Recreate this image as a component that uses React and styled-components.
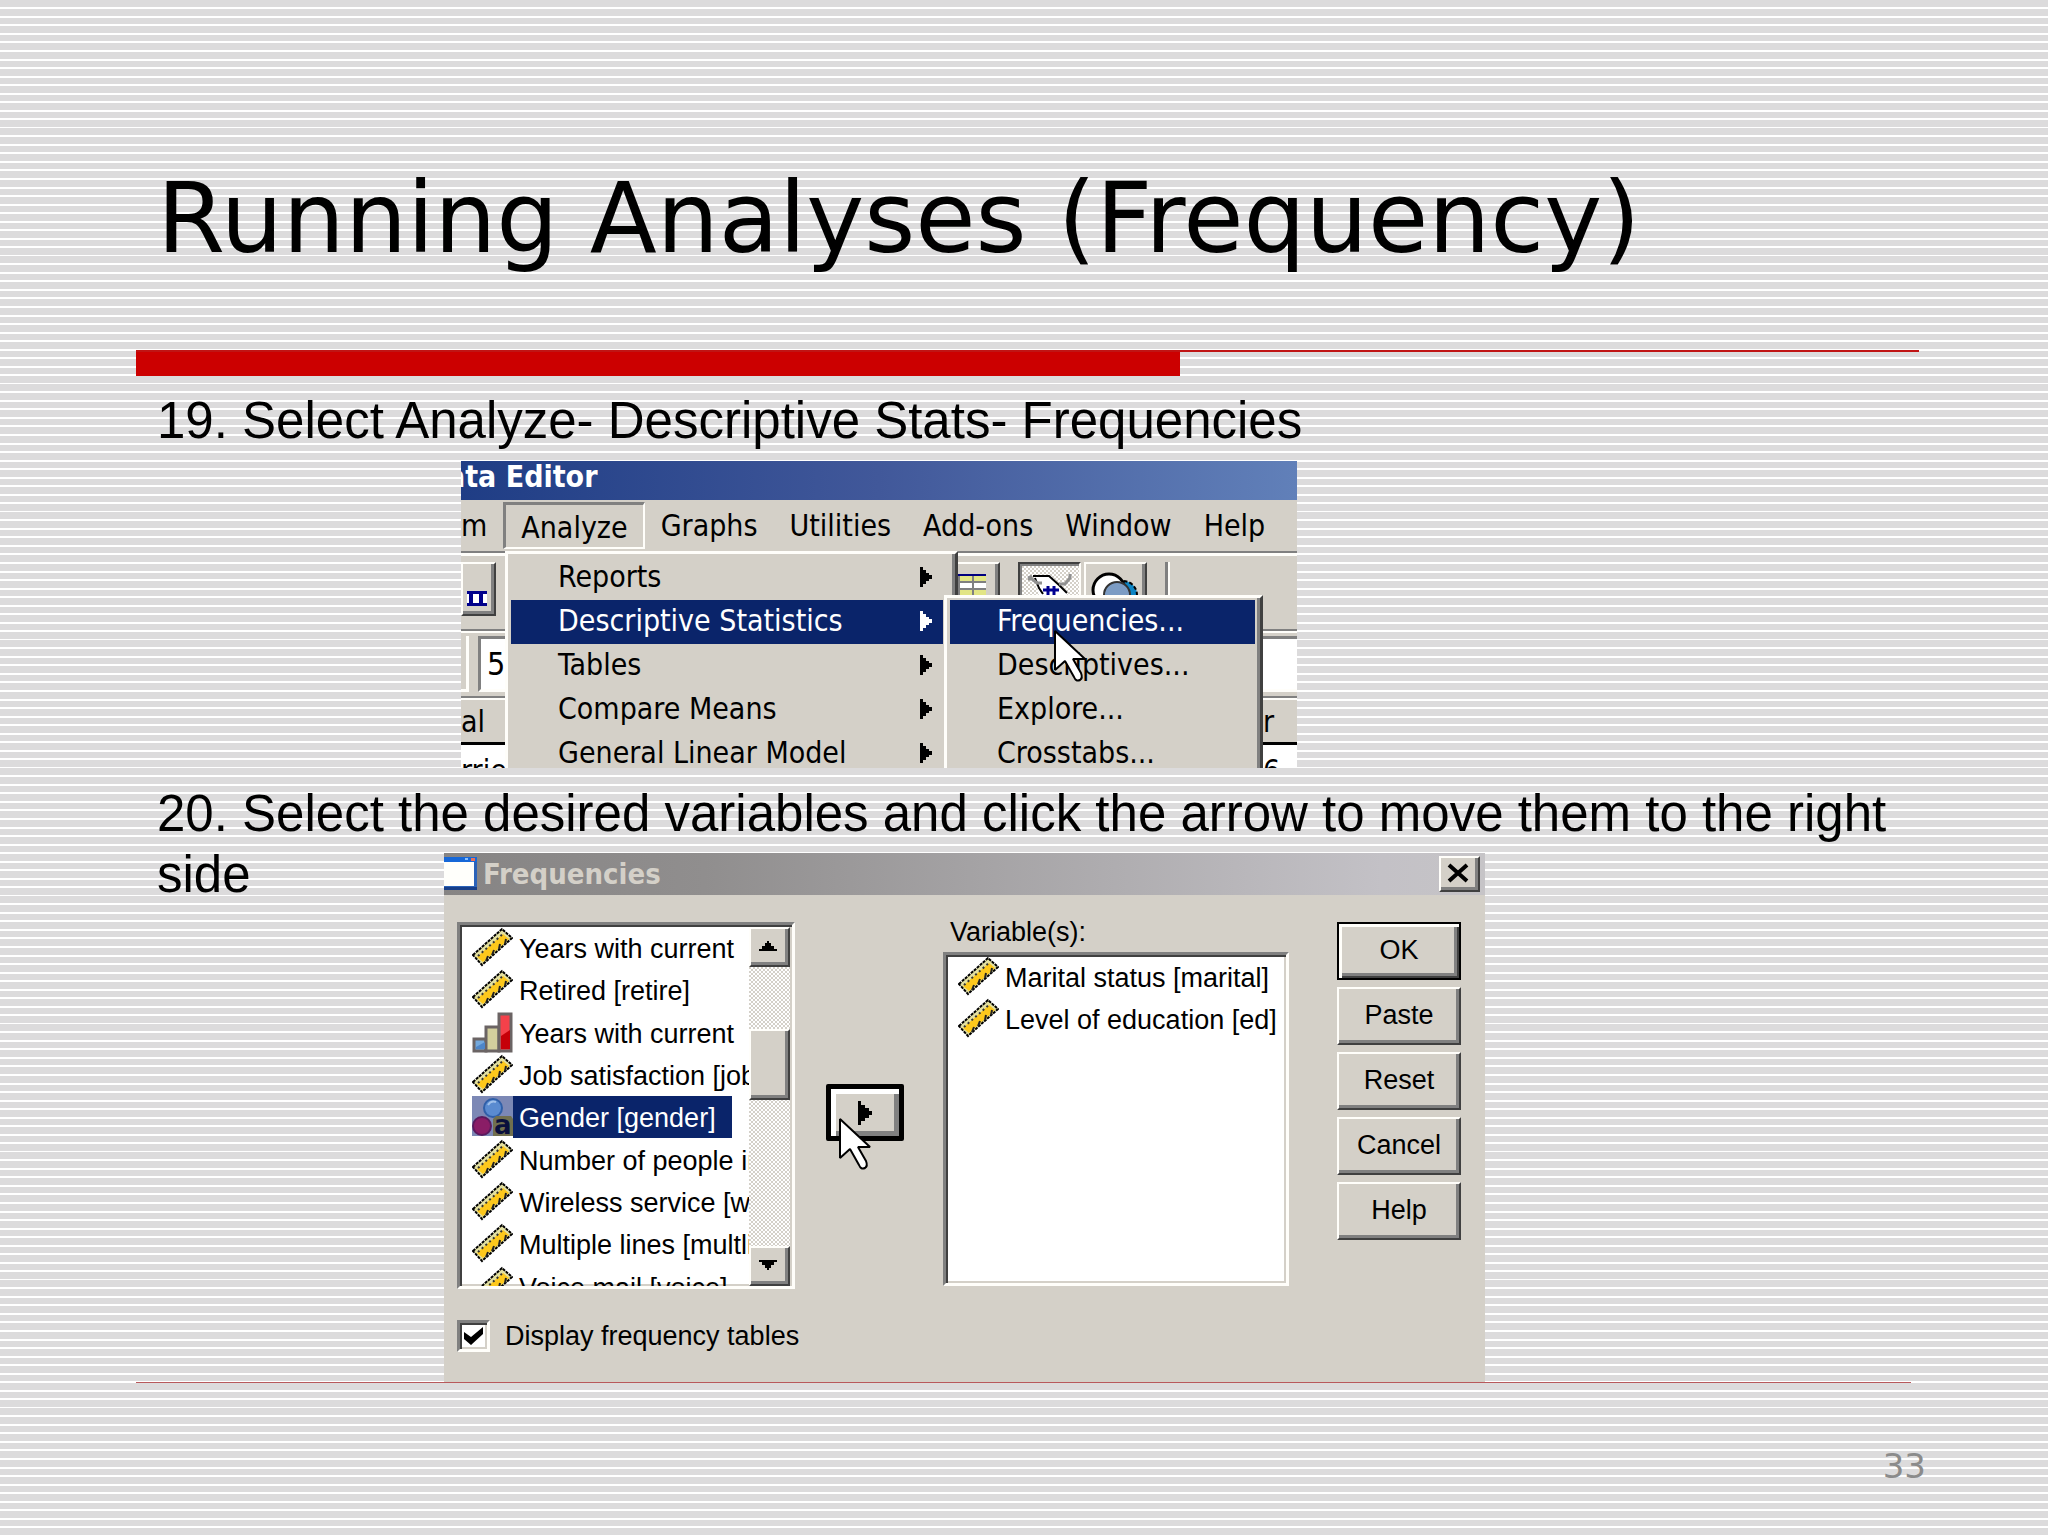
import React, { useState } from "react";
import styled, { createGlobalStyle, css } from "styled-components";

const colors = {
  red: "#cc0000",
  face: "#d4d0c8",
  shadow: "#808080",
  dark: "#404040",
  light: "#fffefa",
  navy: "#0a246a",
};

const menuFont = `"DejaVu Sans Condensed", "DejaVu Sans", sans-serif`;
const dialogFont = `"Liberation Sans", sans-serif`;

// 15 white lines on every 128px of the slide
const stripes = Array.from({ length: 15 }, (_, i) => {
  const y = Math.round(((i + 1) * 128) / 15 - 1.2);
  return `transparent ${y}px, #fff ${y}px, #fff ${y + 2}px, transparent ${y + 2}px`;
}).join(", ");

const GlobalStyle = createGlobalStyle`
  * {
    box-sizing: border-box;
  }
  body {
    margin: 0;
    color: #000;
    background-color: #dcdbdc;
    background-image: linear-gradient(${stripes});
    background-size: 100% 128px;
  }
`;

const raised = css`
  border-style: solid;
  border-width: 2px;
  border-color: ${colors.light} ${colors.dark} ${colors.dark} ${colors.light};
  box-shadow: inset -3px -3px 0 ${colors.shadow};
`;

const sunken = css`
  border-style: solid;
  border-width: 3px;
  border-color: ${colors.shadow} ${colors.light} ${colors.light} ${colors.shadow};
  box-shadow: inset 2px 2px 0 ${colors.dark}, inset -2px -2px 0 ${colors.face};
`;

/* ---------- slide ---------- */

const Slide = styled.main`
  padding: 158px 129px 0 136px;
`;

const Title = styled.h1`
  margin: 0;
  padding-left: 21px;
  font: 400 98px/120px "DejaVu Sans", sans-serif;
`;

const Divider = styled.div`
  margin-top: 72px;
  height: 26px;
  border-top: 2px solid #c01414;
  &::before {
    content: "";
    display: block;
    width: 1044px;
    height: 24px;
    background: ${colors.red};
  }
`;

const Step = styled.p`
  margin: 0;
  padding: 0 21px;
  font: 400 51px/61px "Liberation Sans", sans-serif;
`;

const FirstStep = styled(Step)`
  padding-top: 14px;
`;

const SecondStep = styled(Step)`
  padding-top: 15px;
`;

const Footer = styled.footer`
  margin-right: 8px;
  border-top: 1px solid #b8595c;
`;

const PageNumber = styled.p`
  margin: 0 -15px 0 0;
  padding: 63px 0 0;
  text-align: right;
  color: #8b8b8b;
  font: 400 34px/40px "DejaVu Sans", sans-serif;
`;

/* ---------- data editor ---------- */

const Editor = styled.section`
  position: relative;
  overflow: hidden;
  width: 836px;
  height: 307px;
  margin: 10px 0 0 325px;
  background: ${colors.face};
  font: 400 30px/44px ${menuFont};
`;

const EditorTitle = styled.header`
  height: 39px;
  background: linear-gradient(90deg, #1f3d85, #41589a 50%, #6180b9);
  color: #fff;
  font: 700 30px/32px ${menuFont};
  span {
    margin-left: -14px;
  }
`;

const MenuBar = styled.nav`
  display: flex;
  height: 51px;
  padding: 2px 0;
`;

const MenuName = styled.button`
  margin: 0;
  padding: 0 16px;
  border: 0;
  background: none;
  color: inherit;
  font: inherit;
  ${(props) =>
    props.$cut &&
    css`
      padding-left: 0;
    `}
  ${(props) =>
    props.$open &&
    css`
      border-style: solid;
      border-width: 3px 2px 2px 3px;
      border-color: ${colors.shadow} ${colors.light} ${colors.light} ${colors.shadow};
      padding: 1px 15px 0;
    `}
`;

const Toolbar = styled.div`
  display: flex;
  height: 78px;
  padding-top: 9px;
  border-top: 2px solid ${colors.shadow};
  box-shadow: inset 0 3px 0 ${colors.light};
`;

const ToolGroup = styled.div`
  display: flex;
  gap: 3px;
  margin-left: ${(props) => props.$before || 0}px;
`;

const ToolButton = styled.button`
  ${raised}
  width: ${(props) => props.$width}px;
  height: 54px;
  padding: 5px 4px;
  text-align: right;
  background: ${colors.face};
  svg {
    display: block;
    margin-left: auto;
  }
  ${(props) =>
    props.$pressed &&
    css`
      border-color: ${colors.dark} ${colors.light} ${colors.light} ${colors.dark};
      box-shadow: inset 2px 2px 0 ${colors.shadow};
      background: repeating-conic-gradient(#fff 0 25%, ${colors.face} 0 50%) 0 0 / 4px 4px;
    `}
`;

const ToolDivider = styled.span`
  margin-left: 18px;
  width: 5px;
  height: 72px;
  border-left: 3px solid ${colors.shadow};
  border-right: 2px solid ${colors.light};
`;

const CellBar = styled.div`
  display: flex;
  gap: 9px;
  height: 67px;
  padding: 5px 0 4px;
  border-top: 2px solid ${colors.shadow};
  box-shadow: inset 0 2px 0 ${colors.light};
`;

const CellName = styled.span`
  width: 8px;
  border-right: 3px solid ${colors.light};
  border-bottom: 3px solid ${colors.light};
`;

const CellInput = styled.input`
  ${sunken}
  flex: 1;
  min-width: 0;
  padding: 0 6px;
  border-right: 0;
  background: #fff;
  box-shadow: none;
  font: 400 32px/44px ${menuFont};
`;

const Grid = styled.table`
  width: 100%;
  border-collapse: collapse;
  th {
    height: 46px;
    padding: 4px 0 0;
    border-top: 2px solid ${colors.shadow};
    border-bottom: 3px solid #000;
    box-shadow: inset 0 2px 0 ${colors.light};
    font-weight: 400;
    line-height: 36px;
    text-align: left;
  }
  td {
    padding: 4px 0 0;
    background: #fff;
  }
  th:last-child,
  td:last-child {
    width: 34px;
  }
`;

const Popup = styled.ul`
  position: absolute;
  top: ${(props) => props.$top}px;
  left: ${(props) => props.$left}px;
  width: ${(props) => props.$width}px;
  margin: 0;
  padding: 2px 12px 8px 3px;
  list-style: none;
  background: ${colors.face};
  border-top: 3px solid ${colors.light};
  border-left: 3px solid ${colors.light};
  border-right: 3px solid ${colors.dark};
  box-shadow: inset -3px 0 0 ${colors.shadow};
`;

const SubPopup = styled(Popup)`
  padding-right: 5px;
`;

const PopupItem = styled.button`
  display: flex;
  align-items: center;
  justify-content: space-between;
  width: 100%;
  height: 44px;
  padding: 0 11px 2px 47px;
  border: 0;
  background: ${(props) => (props.$active ? colors.navy : "none")};
  color: ${(props) => (props.$active ? "#fff" : "#000")};
  font: inherit;
  text-align: left;
  white-space: nowrap;
`;

const Pointer = styled.svg`
  position: absolute;
  top: ${(props) => props.$top}px;
  left: ${(props) => props.$left}px;
  width: 33px;
  height: 54px;
`;

/* ---------- frequencies dialog ---------- */

const Dialog = styled.section`
  position: relative;
  width: 1041px;
  margin: -52px 0 0 308px;
  background: ${colors.face};
  font: 400 27px/42px ${dialogFont};
`;

const DialogTitle = styled.header`
  display: flex;
  align-items: center;
  height: 42px;
  padding-right: 5px;
  background: linear-gradient(90deg, #868484, #908e8e 25%, #c3c1c6 90%, #c6c4c7);
  color: ${colors.face};
  h2 {
    flex: 1;
    margin: 0 0 0 6px;
    font: 700 29px/38px ${menuFont};
  }
`;

const CloseButton = styled.button`
  ${raised}
  display: grid;
  place-items: center;
  width: 41px;
  height: 36px;
  padding: 0 3px 3px 0;
  background: ${colors.face};
`;

const DialogBody = styled.div`
  display: flex;
  align-items: flex-start;
  padding: 27px 24px 0 13px;
`;

const SourceList = styled.div`
  ${sunken}
  display: flex;
  width: 338px;
  height: 367px;
  padding: 2px 2px 0 2px;
  background: #fff;
`;

const Rows = styled.ul`
  display: grid;
  flex: 1;
  grid-template-rows: repeat(9, 1fr);
  width: 286px;
  height: 381px;
  margin: 0;
  padding: 0 0 0 10px;
  list-style: none;
`;

const RowsClip = styled.div`
  flex: 1;
  min-width: 0;
  overflow: hidden;
`;

const Row = styled.li`
  display: flex;
  align-items: center;
  white-space: nowrap;
  svg {
    flex: none;
  }
  span {
    height: 42px;
    padding: 1px 16px 0 6px;
    line-height: 42px;
    ${(props) =>
      props.$selected &&
      css`
        background: ${colors.navy};
        color: #fff;
      `}
  }
`;

const ScrollBar = styled.div`
  display: flex;
  flex-direction: column;
  width: 41px;
  background: repeating-conic-gradient(#fff 0 25%, ${colors.face} 0 50%) 0 0 / 4px 4px;
`;

const ScrollButton = styled.button`
  ${raised}
  display: grid;
  place-items: center;
  height: 40px;
  padding: 0 3px 3px 0;
  background: ${colors.face};
`;

const ScrollThumb = styled.div`
  ${raised}
  height: 71px;
  margin: 62px 0 auto;
  background: ${colors.face};
`;

const MoveButton = styled.button`
  display: grid;
  place-items: center;
  width: 78px;
  height: 57px;
  margin: 162px 39px 0 31px;
  padding: 0;
  border: 5px solid #000;
  border-radius: 2px;
  background: ${colors.face};
  box-shadow: inset 5px 5px 0 #fff, inset -5px -5px 0 ${colors.shadow};
`;

const Target = styled.div`
  width: 346px;
  h3 {
    margin: -10px 0 0;
    padding-left: 7px;
    font: inherit;
    line-height: 40px;
  }
`;

const TargetList = styled.div`
  ${sunken}
  overflow: hidden;
  height: 334px;
  padding: 1px 0 0 12px;
  background: #fff;
  ul {
    margin: 0;
    padding: 0;
    list-style: none;
  }
`;

const Actions = styled.div`
  display: flex;
  flex-direction: column;
  gap: 7px;
  width: 124px;
  margin-left: 48px;
`;

const ActionButton = styled.button`
  ${raised}
  height: 58px;
  padding: 0 0 3px;
  background: ${colors.face};
  font: inherit;
  ${(props) =>
    props.$primary &&
    css`
      border-color: #000;
      box-shadow: inset 3px 3px 0 ${colors.light}, inset -2px -2px 0 ${colors.dark},
        inset -5px -5px 0 ${colors.shadow};
    `}
`;

const CheckRow = styled.label`
  display: flex;
  align-items: center;
  gap: 15px;
  padding: 26px 13px 25px;
  input {
    ${sunken}
    appearance: none;
    width: 33px;
    height: 32px;
    margin: 0;
    background: #fff;
  }
  input:checked {
    background: #fff
      url("data:image/svg+xml,%3Csvg xmlns='http://www.w3.org/2000/svg' viewBox='0 0 20 18'%3E%3Cpath d='M0 5l7 5L19 0v7L7 18L0 12z'/%3E%3C/svg%3E")
      center / 20px 18px no-repeat;
  }
`;

/* ---------- drawings ---------- */

const Arrow = ({ size = 12 }) => (
  <svg width={size} height={size + 8} viewBox="0 0 12 20" fill="currentColor" shapeRendering="crispEdges">
    <path d="M0 0h3v3h3v3h3v2h3v4H9v2H6v3H3v3H0z" />
  </svg>
);

const ScrollArrow = ({ down }) => (
  <svg width="20" height="12" viewBox="0 0 20 12" shapeRendering="crispEdges">
    <path d={down ? "M1 1h18v2h-3v3h-3v3h-2v2H9V9H7V6H4V3H1z" : "M1 11h18V9h-3V6h-3V3h-2V1H9v2H7v3H4v3H1z"} />
  </svg>
);

const Cursor = (props) => (
  <Pointer viewBox="0 0 33 54" {...props}>
    <path
      d="M1 2v39l10-9 9 16q2 5 6 3 3-2 1-7l-8-14h12z"
      fill="#fff"
      stroke="#000"
      strokeWidth="2"
      strokeLinejoin="bevel"
    />
  </Pointer>
);

const ScaleIcon = () => (
  <svg width="41" height="42" viewBox="0 0 41 42">
    <path d="M1 28L30 2l10 9-30 27z" fill="#e3e0a0" />
    <path d="M5 30L31 7l6 5L11 35z" fill="#fdc81c" />
    <path d="M1 28L30 2l10 9-30 27z" fill="none" stroke="#000" strokeWidth="2" strokeDasharray="3 1" />
    <path d="M6 29L32 6" stroke="#333" strokeWidth="2" strokeDasharray="2 3" />
    <path d="M14 34l2-5M20 28l2-5M27 22l1-5M33 17l1-5" stroke="#222" strokeWidth="2" />
  </svg>
);

const OrdinalIcon = () => (
  <svg width="41" height="42" viewBox="0 0 41 42">
    <g stroke="#6b6464" strokeWidth="3">
      <path d="M2 27h12v12H2z" fill="#74a9dc" />
      <path d="M14 15h13v24H14z" fill="#d3cf9d" />
      <path d="M27 2h12v37H27z" fill="#f4414a" />
    </g>
    <path d="M29 24l9-6v19h-9z" fill="#c60008" />
    <path d="M4 35l9-5v7H4z" fill="#4d86c9" />
  </svg>
);

const NominalIcon = () => (
  <svg width="41" height="42" viewBox="0 0 41 42">
    <path d="M0 0h41v40H0z" fill="#7c88b5" />
    <circle cx="21" cy="12" r="9" fill="#5a8bd0" stroke="#2f5fa8" strokeWidth="2" />
    <path d="M16 9q3-5 8-3" fill="none" stroke="#9fc0ea" strokeWidth="2" />
    <circle cx="10" cy="30" r="9" fill="#8a1d66" stroke="#5b1a5e" strokeWidth="2" />
    <path d="M24 20h15l2 3v17H21V23z" fill="#716f4e" />
    <text x="22" y="38" fontFamily="DejaVu Sans" fontWeight="700" fontSize="26" fill="#0a0f3c">
      a
    </text>
  </svg>
);

const WindowIcon = () => (
  <svg width="33" height="34" viewBox="0 0 33 34">
    <path d="M0 1h33v32H0z" fill="#2a62b8" />
    <path d="M0 0h33v5H0z" fill="#1768d8" />
    <path d="M0 5h30v24H0z" fill="#fffffb" />
    <path d="M21 1h3v2h-3z" fill="#8ac0ff" />
    <path d="M27 1h4v3h-4z" fill="#e8705a" />
    <path d="M0 30h33v3H0z" fill="#173f88" />
  </svg>
);

const SheetIcon = () => (
  <svg width="40" height="34" viewBox="0 0 40 34" shapeRendering="crispEdges">
    <path d="M0 2h32v32H0z" fill="#808080" />
    <path d="M0 2h32v2H0z" fill="#000080" />
    <path d="M0 4h4v5H0zM6 4h12v5H6zM20 4h12v5H20zM0 18h4v5H0zM6 18h12v5H6zM20 18h12v5H20z" fill="#e2e585" />
    <path d="M0 11h4v5H0zM6 11h12v5H6zM20 11h12v5H20z" fill="#fff" />
  </svg>
);

const LabelIcon = () => (
  <svg width="50" height="34" viewBox="0 0 50 34">
    <path d="M10 3h14l18 17v14H16z" fill="#fff" />
    <path d="M8 4h16l10 9 8 8M10 6l4 10 4 6" fill="none" stroke="#000" strokeWidth="2" />
    <path d="M3 6l4-2M3 7h4l5 4h5M34 12h6l5-6V2" fill="none" stroke="#909090" strokeWidth="3" />
    <path d="M18 18h16M23 14v9M29 14v9" stroke="#000090" strokeWidth="3" />
  </svg>
);

const SetsIcon = () => (
  <svg width="50" height="34" viewBox="0 0 50 34">
    <circle cx="32" cy="23" r="14" fill="#0c84c4" stroke="#000" strokeWidth="2" strokeDasharray="4 2" />
    <circle cx="18" cy="18" r="16" fill="#fff" stroke="#000" strokeWidth="3" />
    <circle cx="26" cy="23" r="13" fill="#7c9cc4" stroke="#333" strokeWidth="2" />
  </svg>
);

const BracketIcon = () => (
  <svg width="26" height="38" viewBox="0 0 26 38" shapeRendering="crispEdges">
    <path d="M0 22h20v14H0z" fill="#fff" />
    <path d="M0 21h20v3H0zM0 33h20v3H0zM2 21h4v14H2zM12 21h4v14h-4z" fill="#00008b" />
  </svg>
);

const icons = { scale: ScaleIcon, ordinal: OrdinalIcon, nominal: NominalIcon };

const variables = [
  { label: "Years with current", icon: "scale" },
  { label: "Retired [retire]", icon: "scale" },
  { label: "Years with current", icon: "ordinal" },
  { label: "Job satisfaction [jobsat]", icon: "scale" },
  { label: "Gender [gender]", icon: "nominal", selected: true },
  { label: "Number of people in", icon: "scale" },
  { label: "Wireless service [wireless]", icon: "scale" },
  { label: "Multiple lines [multline]", icon: "scale" },
  { label: "Voice mail [voice]", icon: "scale" },
];

const Variable = ({ label, icon, selected }) => {
  const Icon = icons[icon];
  return (
    <Row $selected={selected}>
      <Icon />
      <span>{label}</span>
    </Row>
  );
};

const DataEditor = () => (
  <Editor>
    <EditorTitle>
      <span>ata Editor</span>
    </EditorTitle>
    <MenuBar>
      <MenuName $cut>m</MenuName>
      <MenuName $open>Analyze</MenuName>
      {["Graphs", "Utilities", "Add-ons", "Window", "Help"].map((name) => (
        <MenuName key={name}>{name}</MenuName>
      ))}
    </MenuBar>
    <Toolbar>
      <ToolGroup>
        <ToolButton $width={35} aria-label="Variables">
          <BracketIcon />
        </ToolButton>
      </ToolGroup>
      <ToolGroup $before={445}>
        <ToolButton $width={59} aria-label="Select cases">
          <SheetIcon />
        </ToolButton>
      </ToolGroup>
      <ToolGroup $before={18}>
        <ToolButton $width={63} $pressed aria-label="Value labels">
          <LabelIcon />
        </ToolButton>
        <ToolButton $width={63} aria-label="Use sets">
          <SetsIcon />
        </ToolButton>
      </ToolGroup>
      <ToolDivider />
    </Toolbar>
    <CellBar>
      <CellName />
      <CellInput aria-label="Cell value" defaultValue="5" />
    </CellBar>
    <Grid>
      <thead>
        <tr>
          <th>al</th>
          <th>r</th>
        </tr>
      </thead>
      <tbody>
        <tr>
          <td>rrie</td>
          <td>6</td>
        </tr>
      </tbody>
    </Grid>
    <Popup $top={90} $left={44} $width={453}>
      {["Reports", "Descriptive Statistics", "Tables", "Compare Means", "General Linear Model"].map((name) => (
        <li key={name}>
          <PopupItem $active={name === "Descriptive Statistics"}>
            {name}
            <Arrow />
          </PopupItem>
        </li>
      ))}
    </Popup>
    <SubPopup $top={134} $left={483} $width={319}>
      {["Frequencies...", "Descriptives...", "Explore...", "Crosstabs..."].map((name) => (
        <li key={name}>
          <PopupItem $active={name === "Frequencies..."}>{name}</PopupItem>
        </li>
      ))}
    </SubPopup>
    <Cursor $top={168} $left={593} />
  </Editor>
);

const FrequenciesDialog = () => {
  const [tables, setTables] = useState(true);
  return (
    <Dialog>
      <DialogTitle>
        <WindowIcon />
        <h2>Frequencies</h2>
        <CloseButton aria-label="Close">
          <svg width="22" height="20" viewBox="0 0 22 20">
            <path d="M2 2l18 16M20 2L2 18" stroke="#000" strokeWidth="4" />
          </svg>
        </CloseButton>
      </DialogTitle>
      <DialogBody>
        <SourceList>
          <RowsClip>
            <Rows>
              {variables.map((item, i) => (
                <Variable key={i} {...item} />
              ))}
            </Rows>
          </RowsClip>
          <ScrollBar>
            <ScrollButton aria-label="Scroll up">
              <ScrollArrow />
            </ScrollButton>
            <ScrollThumb />
            <ScrollButton aria-label="Scroll down">
              <ScrollArrow down />
            </ScrollButton>
          </ScrollBar>
        </SourceList>
        <MoveButton aria-label="Move to variables">
          <Arrow size={16} />
        </MoveButton>
        <Target>
          <h3>Variable(s):</h3>
          <TargetList>
            <ul>
              <Variable label="Marital status [marital]" icon="scale" />
              <Variable label="Level of education [ed]" icon="scale" />
            </ul>
          </TargetList>
        </Target>
        <Actions>
          <ActionButton $primary>OK</ActionButton>
          <ActionButton>Paste</ActionButton>
          <ActionButton>Reset</ActionButton>
          <ActionButton>Cancel</ActionButton>
          <ActionButton>Help</ActionButton>
        </Actions>
      </DialogBody>
      <CheckRow>
        <input type="checkbox" checked={tables} onChange={(e) => setTables(e.target.checked)} />
        Display frequency tables
      </CheckRow>
      <Cursor $top={264} $left={395} />
    </Dialog>
  );
};

const App = () => (
  <>
    <GlobalStyle />
    <Slide>
      <Title>Running Analyses (Frequency)</Title>
      <Divider />
      <FirstStep>19. Select Analyze- Descriptive Stats- Frequencies</FirstStep>
      <DataEditor />
      <SecondStep>20. Select the desired variables and click the arrow to move them to the right side</SecondStep>
      <FrequenciesDialog />
      <Footer>
        <PageNumber>33</PageNumber>
      </Footer>
    </Slide>
  </>
);

export default App;
